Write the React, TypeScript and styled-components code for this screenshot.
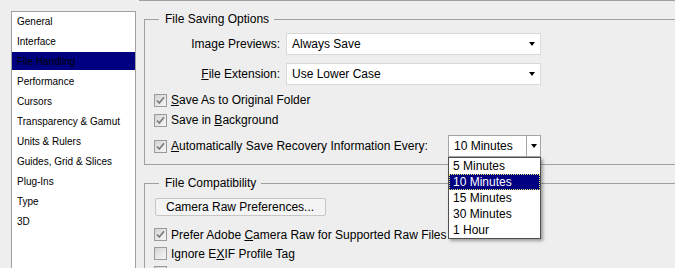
import React from "react";
import styled, { createGlobalStyle } from "styled-components";

const Global = createGlobalStyle`
  html, body { margin: 0; padding: 0; background: #eeeeee; }
  body { font-family: "Liberation Sans", Arial, sans-serif; color: #000; }
`;

const Page = styled.div`
  display: flex;
  width: 675px;
  height: 268px;
  overflow: hidden;
  background: #eeeeee;
`;

const SideColumn = styled.div`
  flex: none;
  width: 136px;
  padding: 11px 0 0 11px;
  box-sizing: border-box;
`;

const CategoryList = styled.ul`
  list-style: none;
  margin: 0;
  padding: 0;
  width: 125px;
  height: 300px;
  box-sizing: border-box;
  border: 1px solid #a0a0a0;
  background: #ffffff;
`;

const CategoryItem = styled.li<{ $selected?: boolean }>`
  height: 18px;
  box-sizing: border-box;
  padding: 1px 0 0 5px;
  line-height: 18px;
  margin-bottom: 2px;
  font-size: 10px;
  color: #000;
  white-space: nowrap;
  overflow: visible;
  background: ${(p) => (p.$selected ? "#000080" : "transparent")};
`;

const Main = styled.div`
  flex: 1;
  min-width: 0;
  margin-left: 3px;
  border-top: 1px solid #a0a0a0;
  padding: 18px 0 0 5px;
  display: flex;
  flex-direction: column;
`;

const GroupBox = styled.section<{ $height: number; $gap?: number }>`
  position: relative;
  flex: none;
  width: 600px;
  height: ${(p) => p.$height}px;
  margin-top: ${(p) => p.$gap ?? 0}px;
  box-sizing: border-box;
  border: 1px solid #a0a0a0;
  border-right: none;
`;

const Legend = styled.div`
  position: absolute;
  top: -8px;
  left: 14px;
  padding: 0 5px 0 6px;
  background: #eeeeee;
  font-size: 12px;
  line-height: 14px;
  white-space: nowrap;
`;

const GroupBody = styled.div<{ $top: number }>`
  display: flex;
  flex-direction: column;
  padding-top: ${(p) => p.$top}px;
`;

const FieldRow = styled.div<{ $after: number }>`
  display: grid;
  grid-template-columns: 135px 255px;
  column-gap: 6px;
  align-items: center;
  height: 22px;
  margin-bottom: ${(p) => p.$after}px;
`;

const FieldLabel = styled.label`
  text-align: right;
  font-size: 12px;
  white-space: nowrap;
`;

const SelectBox = styled.div`
  display: flex;
  align-items: center;
  justify-content: space-between;
  height: 22px;
  box-sizing: border-box;
  padding: 0 5px 0 5px;
  border: 1px solid #d9d9d9;
  background: #ffffff;
  font-size: 12px;
`;

const Arrow = styled.span`
  width: 0;
  height: 0;
  border-left: 3.5px solid transparent;
  border-right: 3.5px solid transparent;
  border-top: 4px solid #000;
`;

const CheckRow = styled.div<{ $h: number; $top?: number }>`
  display: flex;
  align-items: center;
  gap: 4px;
  height: ${(p) => p.$h}px;
  margin-top: ${(p) => p.$top ?? 0}px;
  padding-left: 9px;
  font-size: 12px;
  white-space: nowrap;
`;

const Box = styled.span`
  flex: none;
  display: inline-flex;
  align-items: center;
  justify-content: center;
  width: 13px;
  height: 13px;
  box-sizing: border-box;
  border: 1px solid #9a9a9a;
  background: linear-gradient(135deg, #d2d2d2 0%, #e8e8e8 55%, #f6f6f6 100%);
`;

const CheckText = styled.span<{ $width?: number }>`
  flex: none;
  width: ${(p) => (p.$width ? `${p.$width}px` : "auto")};
`;

const Combo = styled.div`
  position: relative;
  flex: none;
  display: flex;
  width: 93px;
  height: 22px;
  box-sizing: border-box;
  border: 1px solid #a5a5a5;
  background: #ffffff;
  font-size: 12px;
`;

const ComboText = styled.span`
  flex: 1;
  padding-left: 5px;
  line-height: 20px;
`;

const ComboButton = styled.span`
  flex: none;
  width: 14px;
  display: flex;
  align-items: center;
  justify-content: center;
  border-left: 1px solid #a5a5a5;
  box-sizing: border-box;
`;

const Popup = styled.ul`
  position: absolute;
  top: calc(100% + 1px);
  left: -1px;
  width: 93px;
  margin: 0;
  padding: 0;
  list-style: none;
  box-sizing: border-box;
  border: 1px solid #4e4e4e;
  background: #ffffff;
  box-shadow: 2px 2px 3px rgba(0, 0, 0, 0.35);
  z-index: 5;
`;

const PopupItem = styled.li<{ $active?: boolean }>`
  height: 16px;
  line-height: 16px;
  padding-left: 4px;
  font-size: 12px;
  box-sizing: border-box;
  color: ${(p) => (p.$active ? "#ffffff" : "#000")};
  background: ${(p) => (p.$active ? "#000080" : "transparent")};
  outline: ${(p) => (p.$active ? "1px dotted #e8e870" : "none")};
  outline-offset: -1px;
`;

const PushButton = styled.button`
  width: 171px;
  height: 18px;
  margin: 0 0 9px 10px;
  padding: 0 0 0 10px;
  box-sizing: border-box;
  border: 1px solid #c6c6c6;
  border-radius: 2px;
  background: #f4f4f4;
  font-family: "Liberation Sans", Arial, sans-serif;
  font-size: 12px;
  line-height: 16px;
  text-align: left;
  color: #000;
`;

const Check = ({ on }: { on?: boolean }) => (
  <Box>
    {on && (
      <svg width="11" height="11" viewBox="0 0 11 11">
        <path d="M2 5.5 L4.3 8 L9 2.2" fill="none" stroke="#7c7c7c" strokeWidth="1.7" />
      </svg>
    )}
  </Box>
);

const categories = [
  "General",
  "Interface",
  "File Handling",
  "Performance",
  "Cursors",
  "Transparency & Gamut",
  "Units & Rulers",
  "Guides, Grid & Slices",
  "Plug-Ins",
  "Type",
  "3D",
];

const intervals = ["5 Minutes", "10 Minutes", "15 Minutes", "30 Minutes", "1 Hour"];

export default function App() {
  return (
    <>
      <Global />
      <Page>
        <SideColumn>
          <CategoryList>
            {categories.map((c) => (
              <CategoryItem key={c} $selected={c === "File Handling"}>
                {c}
              </CategoryItem>
            ))}
          </CategoryList>
        </SideColumn>
        <Main>
          <GroupBox $height={146}>
            <Legend>File Saving Options</Legend>
            <GroupBody $top={13}>
              <FieldRow $after={8}>
                <FieldLabel>
                  Ima<u>g</u>e Previews:
                </FieldLabel>
                <SelectBox>
                  <span>Always Save</span>
                  <Arrow />
                </SelectBox>
              </FieldRow>
              <FieldRow $after={5}>
                <FieldLabel>
                  <u>F</u>ile Extension:
                </FieldLabel>
                <SelectBox>
                  <span>Use Lower Case</span>
                  <Arrow />
                </SelectBox>
              </FieldRow>
              <CheckRow $h={20}>
                <Check on />
                <CheckText>
                  <u>S</u>ave As to Original Folder
                </CheckText>
              </CheckRow>
              <CheckRow $h={20}>
                <Check on />
                <CheckText>
                  Save in <u>B</u>ackground
                </CheckText>
              </CheckRow>
              <CheckRow $h={22} $top={5}>
                <Check on />
                <CheckText $width={273}>
                  <u>A</u>utomatically Save Recovery Information Every:
                </CheckText>
                <Combo>
                  <ComboText>10 Minutes</ComboText>
                  <ComboButton>
                    <Arrow />
                  </ComboButton>
                  <Popup>
                    {intervals.map((i) => (
                      <PopupItem key={i} $active={i === "10 Minutes"}>
                        {i}
                      </PopupItem>
                    ))}
                  </Popup>
                </Combo>
              </CheckRow>
            </GroupBody>
          </GroupBox>
          <GroupBox $height={140} $gap={18}>
            <Legend>File Compatibility</Legend>
            <GroupBody $top={14}>
              <PushButton>Camera Raw Preferences...</PushButton>
              <CheckRow $h={19}>
                <Check on />
                <CheckText>
                  Prefer Adobe <u>C</u>amera Raw for Supported Raw Files
                </CheckText>
              </CheckRow>
              <CheckRow $h={19}>
                <Check />
                <CheckText>
                  Ignore E<u>X</u>IF Profile Tag
                </CheckText>
              </CheckRow>
              <CheckRow $h={19}>
                <Check />
                <CheckText>Ask Before Saving Layered TIFF Files</CheckText>
              </CheckRow>
            </GroupBody>
          </GroupBox>
        </Main>
      </Page>
    </>
  );
}
